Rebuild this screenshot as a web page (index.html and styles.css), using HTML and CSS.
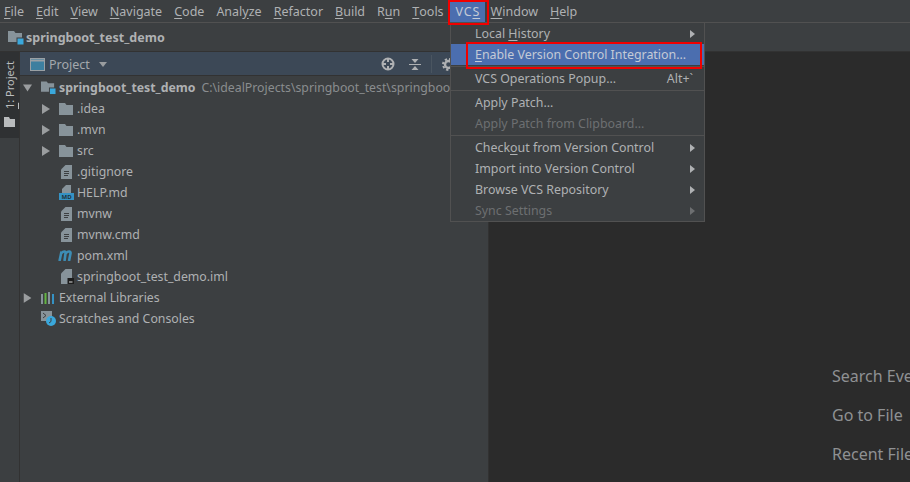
FILE: index.html
```html
<!DOCTYPE html>
<html lang="en">
<head>
    <meta charset="UTF-8">
    <title>springboot_test_demo</title>
    <link rel="stylesheet" href="styles.css">
</head>
<body>
    <svg class="defs" width="0" height="0">
        <symbol id="folder" viewBox="0 0 14 12"><path d="M0 0h6l1.500 2H14v10H0z" fill="#87939a"/></symbol>
        <symbol id="file" viewBox="0 0 11 14"><path d="M4.500 0H11v14H0V4.500z" fill="#87939a"/><path d="M3 6.500h5M3 8.500h5M3 10.500h4" stroke="#3c3f41"/></symbol>
        <symbol id="arrow-right" viewBox="0 0 8 10"><path d="M0 0l8 5-8 5z" fill="#9a9d9f"/></symbol>
    </svg>

    <div class="menubar">
        <span class="menu-item"><u>F</u>ile</span>
        <span class="menu-item"><u>E</u>dit</span>
        <span class="menu-item"><u>V</u>iew</span>
        <span class="menu-item"><u>N</u>avigate</span>
        <span class="menu-item"><u>C</u>ode</span>
        <span class="menu-item">Anal<u>y</u>ze</span>
        <span class="menu-item"><u>R</u>efactor</span>
        <span class="menu-item"><u>B</u>uild</span>
        <span class="menu-item">R<u>u</u>n</span>
        <span class="menu-item"><u>T</u>ools</span>
        <span class="menu-item active">VC<u>S</u></span>
        <span class="menu-item"><u>W</u>indow</span>
        <span class="menu-item"><u>H</u>elp</span>
    </div>

    <div class="navbar">
        <svg width="16" height="15" viewBox="0 0 16 15"><path d="M0 1h6l1.500 2H14v9H0z" fill="#87939a"/><rect x="9" y="8" width="7" height="7" fill="#3aa8dc" stroke="#3c3f41"/></svg>
        <span class="navbar-title">springboot_test_demo</span>
    </div>

    <div class="workspace">
        <div class="side-stripe">
            <div class="side-tab">
                <span class="side-tab-label"><u>1</u>: Project</span>
                <svg width="11" height="10" viewBox="0 0 11 10"><path d="M0 0h5l1 2h5v8H0z" fill="#b9bbbd"/></svg>
            </div>
        </div>

        <div class="project-panel">
            <div class="panel-header">
                <svg width="15" height="13" viewBox="0 0 15 13"><rect x=".5" y=".5" width="14" height="12" fill="#3d7f9f" stroke="#9aa0a4"/><path d="M1 2.500h13" stroke="#9aa0a4" stroke-width="2"/></svg>
                <span class="panel-title">Project</span>
                <svg class="caret" width="8" height="5" viewBox="0 0 8 5"><path d="M0 0h8L4 5z" fill="#9a9d9f"/></svg>
                <div class="panel-tools">
                    <svg width="14" height="14" viewBox="0 0 14 14" fill="none" stroke="#afb1b3" stroke-width="2"><circle cx="7" cy="7" r="5.500"/><path d="M7 1v4M7 9v4M1 7h4M9 7h4"/></svg>
                    <svg class="collapse-icon" width="12" height="13" viewBox="0 0 12 13" fill="#afb1b3"><path d="M0 6h12v1H0zM6 5L2.500 1h7zM6 8l-3.500 4h7z"/></svg>
                    <span class="tool-sep"></span>
                    <svg width="13" height="13" viewBox="0 0 13 13" fill="none" stroke="#afb1b3"><circle cx="6.500" cy="6.500" r="3.500" stroke-width="2.400"/><circle cx="6.500" cy="6.500" r="5.500" stroke-width="2" stroke-dasharray="2.300 2"/></svg>
                </div>
            </div>

            <div class="tree">
                <div class="tree-row top-row">
                    <svg class="tree-arrow" width="9" height="8" viewBox="0 0 10 8"><path d="M0 0h10L5 8z" fill="#9a9d9f"/></svg>
                    <svg class="module-icon" width="15" height="15" viewBox="0 0 16 15"><path d="M0 1h6l1.500 2H14v9H0z" fill="#87939a"/><rect x="9" y="8" width="7" height="7" fill="#3aa8dc" stroke="#3c3f41"/></svg>
                    <span class="root-name">springboot_test_demo</span>
                    <span class="tree-path">C:\idealProjects\springboot_test\springboot_test_demo</span>
                </div>
                <div class="tree-row depth-1">
                    <svg class="tree-arrow" width="8" height="10"><use href="#arrow-right"/></svg>
                    <svg class="folder-icon" width="14" height="12"><use href="#folder"/></svg>
                    <span>.idea</span>
                </div>
                <div class="tree-row depth-1">
                    <svg class="tree-arrow" width="8" height="10"><use href="#arrow-right"/></svg>
                    <svg class="folder-icon" width="14" height="12"><use href="#folder"/></svg>
                    <span>.mvn</span>
                </div>
                <div class="tree-row depth-1">
                    <svg class="tree-arrow" width="8" height="10"><use href="#arrow-right"/></svg>
                    <svg class="folder-icon" width="14" height="12"><use href="#folder"/></svg>
                    <span>src</span>
                </div>
                <div class="tree-row depth-2">
                    <svg class="file-icon" width="11" height="14"><use href="#file"/></svg>
                    <span>.gitignore</span>
                </div>
                <div class="tree-row depth-2">
                    <svg class="md-icon" width="15" height="15" viewBox="0 0 15 15"><path d="M7 0h5v8H3V4z" fill="#87939a"/><rect y="8" width="15" height="7" fill="#3592c4"/><text x="7.500" y="14" class="md-text">MD</text></svg>
                    <span>HELP.md</span>
                </div>
                <div class="tree-row depth-2">
                    <svg class="file-icon" width="11" height="14"><use href="#file"/></svg>
                    <span>mvnw</span>
                </div>
                <div class="tree-row depth-2">
                    <svg class="file-icon" width="11" height="14"><use href="#file"/></svg>
                    <span>mvnw.cmd</span>
                </div>
                <div class="tree-row depth-2">
                    <svg class="pom-icon" width="16" height="11" viewBox="0 0 16 11" fill="none" stroke="#3d8db5" stroke-width="2.600"><path d="M1.500 11L3.500 1.500M3.500 3c2-2 4.500-2 4 0.500L6.500 11M8 3c2-2 5-2 4.500 0.500L11 11"/></svg>
                    <span>pom.xml</span>
                </div>
                <div class="tree-row depth-2">
                    <svg class="iml-icon" width="13" height="15" viewBox="0 0 13 15"><path d="M4.500 0H11v15H0V4.500z" fill="#87939a"/><rect x="6.500" y="9" width="6.500" height="6" fill="#1d1d1d"/><path d="M8 13h3.500" stroke="#dcdcdc"/></svg>
                    <span>springboot_test_demo.iml</span>
                </div>
                <div class="tree-row top-row">
                    <svg class="tree-arrow" width="9" height="10" viewBox="0 0 8 10"><use href="#arrow-right"/></svg>
                    <svg class="folder-icon" width="14" height="12" viewBox="0 0 14 12"><path d="M1 2v10" stroke="#87939a" stroke-width="2"/><path d="M4.500 1v11" stroke="#62b543" stroke-width="2"/><path d="M8 0v12" stroke="#87939a" stroke-width="2"/><path d="M12 2v10" stroke="#3592c4" stroke-width="2"/></svg>
                    <span>External Libraries</span>
                </div>
                <div class="tree-row scratch-row">
                    <svg class="module-icon" width="15" height="15" viewBox="0 0 15 15"><path d="M0 0h11v10H0z" fill="#87939a"/><path d="M2 2l3 2.500L2 7" fill="none" stroke="#3c3f41"/><circle cx="10" cy="10" r="5" fill="#3aa8dc"/><path d="M10 7v3.500L8 12" fill="none" stroke="#3c3f41"/></svg>
                    <span>Scratches and Consoles</span>
                </div>
            </div>
        </div>

        <div class="editor">
            <p class="hint">Search Everywhere <span class="hint-key">Double Shift</span></p>
            <p class="hint">Go to File <span class="hint-key">Ctrl+Shift+N</span></p>
            <p class="hint">Recent Files <span class="hint-key">Ctrl+E</span></p>
        </div>
    </div>

    <div class="popup">
        <div class="popup-row"><span>Local <u>H</u>istory</span><span class="sub"></span></div>
        <div class="popup-row selected"><span><u>E</u>nable Version Control Integration...</span></div>
        <div class="popup-sep"></div>
        <div class="popup-row"><span>VCS Operations Popup...</span><span class="shortcut">Alt+`</span></div>
        <div class="popup-sep"></div>
        <div class="popup-row"><span>Apply Patch...</span></div>
        <div class="popup-row disabled"><span>Apply Patch from Clipboard...</span></div>
        <div class="popup-sep"></div>
        <div class="popup-row"><span>Check<u>o</u>ut from Version Control</span><span class="sub"></span></div>
        <div class="popup-row"><span>Import into Version Control</span><span class="sub"></span></div>
        <div class="popup-row"><span>Browse VCS Repository</span><span class="sub"></span></div>
        <div class="popup-row disabled"><span>Sync Settings</span><span class="sub"></span></div>
    </div>

    <!-- red marks drawn on the screenshot -->
    <div class="mark mark-menu"></div>
    <div class="mark mark-item"></div>
</body>
</html>
```

FILE: styles.css
```css
/* base */
html, body {
    height: 100%;
}

body {
    margin: 0;
    position: relative;
    display: flex;
    flex-direction: column;
    overflow: hidden;
    background: #3c3f41;
    color: #afb1b3;
    font-family: 'Noto Sans', 'Open Sans', sans-serif;
    font-size: 12.5px;
    white-space: nowrap;
}

.defs {
    position: absolute;
}

u {
    text-underline-offset: 2px;
}

/* top bars */
.menubar {
    display: flex;
    height: 22px;
    align-items: stretch;
    border-bottom: 1px solid #515151;
}

.menu-item {
    display: flex;
    align-items: center;
    padding: 0 6px;
    white-space: pre;
}

.menu-item:first-child {
    padding-left: 4px;
}

.active {
    width: 35px;
    box-sizing: border-box;
    letter-spacing: 0.8px;
    background: #4b6eaf;
    color: #c4cad6;
}

.navbar {
    display: flex;
    align-items: center;
    height: 28px;
    padding-left: 8px;
    gap: 2px;
    border-bottom: 1px solid #323232;
}

.navbar-title,
.root-name {
    font-weight: 700;
}

/* main area */
.workspace {
    flex: 1;
    display: flex;
    min-height: 0;
}

.side-stripe {
    width: 19px;
    flex: none;
    border-right: 1px solid #323232;
}

.side-tab {
    height: 86px;
    background: #2f3133;
    display: flex;
    flex-direction: column;
    align-items: center;
    gap: 8px;
    padding-top: 9px;
    box-sizing: border-box;
}

.side-tab-label {
    writing-mode: vertical-rl;
    transform: rotate(180deg);
    font-size: 11px;
    line-height: 19px;
    color: #bbbdbf;
}

.project-panel {
    width: 468px;
    flex: none;
    overflow: hidden;
    border-right: 1px solid #323232;
}

.panel-header {
    display: flex;
    align-items: center;
    height: 24px;
    padding: 1px 33px 0 10px;
    box-sizing: border-box;
    background: #3c4856;
    border-bottom: 1px solid #323232;
}

.panel-title {
    margin-left: 4px;
    color: #a4a8ad;
}

.caret {
    margin-left: 9px;
}

.panel-tools {
    margin-left: auto;
    display: flex;
    align-items: center;
    gap: 10px;
}

.collapse-icon {
    margin-left: 4px;
}

.tool-sep {
    width: 1px;
    height: 18px;
    background: #4a5560;
}

/* tree */
.tree {
    padding-top: 1px;
    font-size: 12.3px;
}

.tree-row {
    display: flex;
    align-items: center;
    height: 21px;
}

.top-row {
    padding-left: 3px;
}

.scratch-row {
    padding-left: 21px;
}

.depth-1 {
    padding-left: 22px;
}

.depth-2 {
    padding-left: 39px;
}

.tree-arrow {
    flex: none;
    margin-right: 9px;
}

.module-icon {
    flex: none;
    margin-right: 3px;
}

.folder-icon {
    flex: none;
    margin-right: 4px;
}

.file-icon {
    flex: none;
    margin: 0 5px 0 2px;
}

.md-icon {
    flex: none;
    margin-right: 3px;
}

.pom-icon {
    flex: none;
    margin: 0 3px 0 -1px;
}

.iml-icon {
    flex: none;
    margin: 0 3px 0 2px;
}

.root-name {
    color: #afb1b3;
}

.tree-path {
    margin-left: 6px;
    color: #8a8d8f;
}

.md-text {
    font-size: 6px;
    font-weight: 700;
    fill: #20323c;
    text-anchor: middle;
}

.editor {
    flex: 1;
    background: #2b2b2b;
    padding: 313px 0 0 343px;
    overflow: hidden;
}

.hint {
    margin: 0 0 16px;
    font-size: 16px;
    line-height: 23px;
    color: #8f9193;
}

.hint-key {
    margin-left: 8px;
    color: #589df6;
}

/* VCS popup, opens over the window */
.popup {
    position: absolute;
    left: 450px;
    top: 22px;
    width: 253px;
    height: 198px;
    background: #3c3f41;
    border: 1px solid #515151;
    font-size: 12.4px;
}

.popup-row {
    display: flex;
    align-items: center;
    height: 21px;
    padding-left: 24px;
}

.selected {
    background: #4b6eaf;
    color: #c4cad6;
}

.disabled {
    color: #6d6f71;
}

.popup-sep {
    height: 1px;
    margin: 1px 0;
    background: #515151;
}

.shortcut {
    margin-left: auto;
    margin-right: 11px;
}

.sub {
    margin-left: auto;
    margin-right: 9px;
    border-left: 5px solid #afb1b3;
    border-top: 4.500px solid transparent;
    border-bottom: 4.500px solid transparent;
}

.disabled .sub {
    border-left-color: #6d6f71;
}

.mark {
    position: absolute;
    border: 2px solid #f00000;
}

.mark-menu {
    left: 448px;
    top: 0;
    width: 37px;
    height: 21px;
}

.mark-item {
    left: 466px;
    top: 42px;
    width: 232px;
    height: 23px;
}
```
